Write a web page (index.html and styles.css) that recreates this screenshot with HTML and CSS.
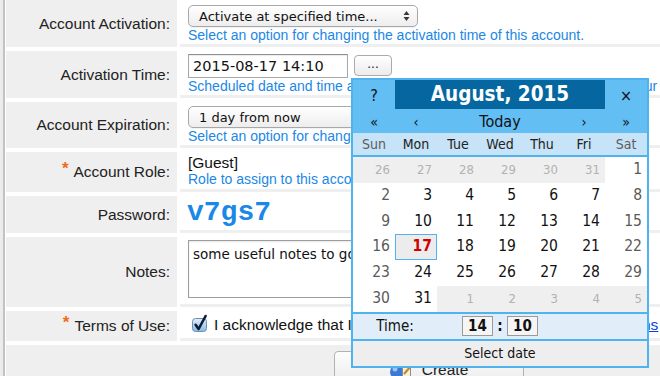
FILE: index.html
```html
<!DOCTYPE html>
<html>
<head>
<meta charset="utf-8">
<title>Account</title>
<link rel="stylesheet" href="styles.css">
</head>
<body>
<div class="page">
  <div class="form">
    <div class="lbl">Account Activation:</div>
    <div class="val v-act">
      <div class="select"><span>Activate at specified time...</span><svg class="arr" width="7" height="12" viewBox="0 0 7 12"><path d="M3.5 1 L6.5 5 H0.5Z M3.5 11 L6.5 7 H0.5Z" fill="#3a3a3a"/></svg></div>
      <div class="help">Select an option for changing the activation time of this account.</div>
    </div>

    <div class="lbl">Activation Time:</div>
    <div class="val v-time">
      <div class="dt"><span class="inp">2015-08-17 14:10</span><span class="btn">...</span></div>
      <div class="help">Scheduled date and time at which this account will be activated, as per your time zone.</div>
    </div>

    <div class="lbl">Account Expiration:</div>
    <div class="val v-exp">
      <div class="select"><span>1 day from now</span><svg class="arr" width="7" height="12" viewBox="0 0 7 12"><path d="M3.5 1 L6.5 5 H0.5Z M3.5 11 L6.5 7 H0.5Z" fill="#3a3a3a"/></svg></div>
      <div class="help">Select an option for changing the expiration time of this account.</div>
    </div>

    <div class="lbl"><span class="req">*</span>Account Role:</div>
    <div class="val v-role">
      <div class="txt">[Guest]</div>
      <div class="help">Role to assign to this account.</div>
    </div>

    <div class="lbl">Password:</div>
    <div class="val v-pw">
      <div class="pw">v7gs7</div>
    </div>

    <div class="lbl">Notes:</div>
    <div class="val v-notes">
      <div class="ta">some useful notes to go with this account</div>
    </div>

    <div class="lbl"><span class="req">*</span>Terms of Use:</div>
    <div class="val v-terms">
      <div class="chk">
        <svg width="18" height="20" viewBox="0 0 18 20">
          <defs><linearGradient id="cbg" x1="0" y1="0" x2="0" y2="1"><stop offset="0" stop-color="#e2eefa"/><stop offset="1" stop-color="#86bbe8"/></linearGradient></defs>
          <rect x="1.5" y="5.5" width="14" height="13" rx="3" fill="url(#cbg)" stroke="#6f8fb2"/>
          <path d="M4.6 11.8 L7.6 16 L14.6 3" fill="none" stroke="#0f1d3a" stroke-width="2.6" stroke-linecap="round" stroke-linejoin="round"/>
        </svg>
        <span class="txt">I acknowledge that I read and agree to the <a class="lnk">Terms and Conditions</a></span>
      </div>
    </div>

    <div class="actions">
      <div class="create">
        <svg width="24" height="22" viewBox="0 0 24 22">
          <circle cx="8" cy="13" r="7" fill="#3b7ad2"/>
          <circle cx="6" cy="10" r="2.5" fill="#9cc3f2"/>
          <rect x="13.5" y="7.5" width="8" height="11" fill="#f6f1dc" stroke="#8d8d8d"/>
          <path d="M15 15 L22 7" stroke="#c9861e" stroke-width="2"/>
        </svg>
        <span>Create</span>
      </div>
    </div>
  </div>
</div>

<div class="cal">
  <div class="cal-head">
    <div class="c-help">?</div>
    <div class="c-title">August, 2015</div>
    <div class="c-close">×</div>
  </div>
  <div class="cal-nav">
    <div>«</div><div>‹</div><div class="today">Today</div><div>›</div><div>»</div>
  </div>
  <div class="cal-days">
    <div class="we">Sun</div><div>Mon</div><div>Tue</div><div>Wed</div><div>Thu</div><div>Fri</div><div class="we">Sat</div>
  </div>
  <div class="cal-grid">
    <div class="d oth">26</div><div class="d oth">27</div><div class="d oth">28</div><div class="d oth">29</div><div class="d oth">30</div><div class="d oth">31</div><div class="d we">1</div>
    <div class="d we">2</div><div class="d">3</div><div class="d">4</div><div class="d">5</div><div class="d">6</div><div class="d">7</div><div class="d we">8</div>
    <div class="d we">9</div><div class="d">10</div><div class="d">11</div><div class="d">12</div><div class="d">13</div><div class="d">14</div><div class="d we">15</div>
    <div class="d we">16</div><div class="d tod">17</div><div class="d">18</div><div class="d">19</div><div class="d">20</div><div class="d">21</div><div class="d we">22</div>
    <div class="d we">23</div><div class="d">24</div><div class="d">25</div><div class="d">26</div><div class="d">27</div><div class="d">28</div><div class="d we">29</div>
    <div class="d we">30</div><div class="d">31</div><div class="d oth">1</div><div class="d oth">2</div><div class="d oth">3</div><div class="d oth">4</div><div class="d oth">5</div>
  </div>
  <div class="cal-time">
    <div class="tl">Time:</div>
    <div class="tboxes"><span class="tb">14</span><span class="colon">:</span><span class="tb">10</span></div>
  </div>
  <div class="cal-foot">Select date</div>
</div>
</body>
</html>
```
FILE: styles.css
```css
* { box-sizing: border-box; }
html, body { margin: 0; padding: 0; }
body {
  width: 660px;
  height: 376px;
  overflow: hidden;
  position: relative;
  background: #ececec;
  font-family: "Liberation Sans", Arial, sans-serif;
  color: #222;
}
.page {
  margin-left: 3px;
  border-left: 2px solid #c2c2c2;
  padding-left: 1px;
  background: #fff;
  width: 860px;
}
.form {
  display: grid;
  grid-template-columns: 171px 671px;
  grid-template-rows: 47px 47px 46px 40px 37px 70px 30px 44px;
  column-gap: 3px;
  row-gap: 4px;
}
.lbl {
  background: #efefef;
  display: flex;
  align-items: center;
  justify-content: flex-end;
  padding-right: 7px;
  font-size: 15.5px;
  color: #222;
}
.req {
  color: #f26a1b;
  font-weight: bold;
  font-size: 17px;
  margin-right: 5px;
  position: relative;
  top: -3px;
}
.val {
  background: #fff;
  border-bottom: 3px solid #efefef;
  padding-left: 8px;
  display: flex;
  flex-direction: column;
}
.help {
  font-size: 14px;
  line-height: 16px;
  color: #1b87e6;
  white-space: nowrap;
}
.v-act { padding-top: 5px; }
.v-exp { padding-top: 4px; }
.v-time { padding-top: 3px; }
.v-role { padding-top: 2px; }
.v-pw { justify-content: center; padding-bottom: 0; }
.v-notes { padding-top: 3px; }
.v-terms { justify-content: center; }

.select {
  width: 230px;
  height: 22px;
  border: 1px solid #a8a8a8;
  border-radius: 5px;
  background: linear-gradient(#ffffff, #ededed);
  box-shadow: 0 1px 1px rgba(0,0,0,0.06);
  display: flex;
  align-items: center;
  padding-left: 10px;
  padding-right: 7px;
  font-family: "DejaVu Sans", sans-serif;
  font-size: 13px;
  color: #111;
}
.select .arr { margin-left: auto; }
.dt { display: flex; align-items: flex-start; gap: 6px; height: 24px; }
.inp {
  width: 160px;
  height: 24px;
  border: 1px solid #a9a9a9;
  border-top-color: #8f8f8f;
  box-shadow: inset 0 1px 1px rgba(0,0,0,0.08);
  font-family: "DejaVu Sans", sans-serif;
  font-size: 14.5px;
  line-height: 22px;
  padding-left: 4px;
  color: #111;
}
.btn {
  margin-top: 1px;
  width: 38px;
  height: 21px;
  border: 1px solid #ababab;
  border-radius: 4px;
  background: linear-gradient(#ffffff, #ececec);
  text-align: center;
  font-family: "DejaVu Sans", sans-serif;
  font-size: 12px;
  line-height: 16px;
  color: #222;
}
.txt { font-size: 15.5px; line-height: 17px; color: #111; }
.pw {
  font-family: "Liberation Mono", "Courier New", monospace;
  font-weight: bold;
  font-size: 28px;
  color: #1b87e6;
  line-height: 30px;
  margin-left: -1px;
}
.ta {
  width: 430px;
  height: 58px;
  border: 1px solid #9d9d9d;
  box-shadow: inset 0 1px 2px rgba(0,0,0,0.1);
  padding: 4px 4px;
  font-family: "DejaVu Sans", sans-serif;
  font-size: 13.5px;
  line-height: 18px;
  color: #111;
  white-space: nowrap;
}
.chk { display: flex; align-items: center; gap: 5px; padding-left: 3px; white-space: nowrap; }
.chk svg { margin-top: -4px; }
.lnk { color: #0b3fe0; text-decoration: underline; }
.actions {
  grid-column: 1 / 3;
  background: #efefef;
  display: flex;
  justify-content: center;
  padding-top: 6px;
}
.create {
  width: 190px;
  height: 38px;
  border: 1px solid #b2b2b2;
  border-radius: 4px;
  background: linear-gradient(#fdfdfd, #e9e9e9);
  display: flex;
  align-items: center;
  justify-content: center;
  gap: 9px;
  font-size: 15.5px;
  color: #222;
}

/* calendar popup */
.cal {
  position: absolute;
  left: 351px;
  top: 78px;
  width: 298px;
  border: 2px solid #4fb3ef;
  background: #fff;
  font-family: "DejaVu Sans Condensed", "DejaVu Sans", sans-serif;
  color: #111;
}
.cal-head {
  display: grid;
  grid-template-columns: 42px 210px 42px;
  height: 30px;
  background: #62bef3;
  text-align: center;
  align-items: center;
}
.c-help, .c-close { font-size: 16px; color: #111; }
.c-title {
  align-self: start;
  height: 29px;
  line-height: 29px;
  background: #0667a0;
  color: #fff;
  font-weight: bold;
  font-size: 20.5px;
}
.cal-nav {
  display: grid;
  grid-template-columns: 42px 42px 126px 42px 42px;
  height: 23px;
  background: #62bef3;
  text-align: center;
  align-items: center;
  font-size: 14px;
  color: #111;
}
.cal-nav .today { font-size: 16px; }
.cal-days {
  display: grid;
  grid-template-columns: repeat(7, 42px);
  height: 24px;
  background: #c6e3f7;
  border-bottom: 2px solid #4fb3ef;
  text-align: center;
  align-items: center;
  font-size: 14px;
  color: #222;
}
.cal-days .we { color: #5c5c5c; }
.cal-grid {
  display: grid;
  grid-template-columns: repeat(7, 42px);
  grid-auto-rows: 25.8px;
  border-bottom: 2px solid #4fb3ef;
}
.d {
  text-align: right;
  padding-right: 5px;
  font-size: 15.5px;
  line-height: 25.8px;
  color: #111;
}
.d.we { color: #5a5a5a; }
.d.oth { background: #efefef; color: #b2b2b2; font-size: 13px; }
.d.tod {
  border: 1px solid #4fb3ef;
  background: #ececec;
  color: #d30000;
  font-weight: bold;
  padding-right: 4px;
  line-height: 23.8px;
}
.cal-time {
  display: grid;
  grid-template-columns: 84px 126px 84px;
  height: 27px;
  background: #e1eef9;
  border-bottom: 2px solid #4fb3ef;
  align-items: center;
}
.tl { text-align: center; font-size: 15px; }
.tboxes { display: flex; justify-content: center; align-items: center; }
.tb {
  width: 31px;
  height: 20px;
  border: 1px solid #9a9a9a;
  background: #f5f5f5;
  text-align: center;
  font-weight: bold;
  font-size: 15px;
  line-height: 18px;
}
.colon { width: 14px; text-align: center; font-weight: bold; font-size: 15px; }
.cal-foot {
  height: 25px;
  line-height: 25px;
  background: #eeeeee;
  text-align: center;
  font-size: 14px;
  color: #111;
}
```
